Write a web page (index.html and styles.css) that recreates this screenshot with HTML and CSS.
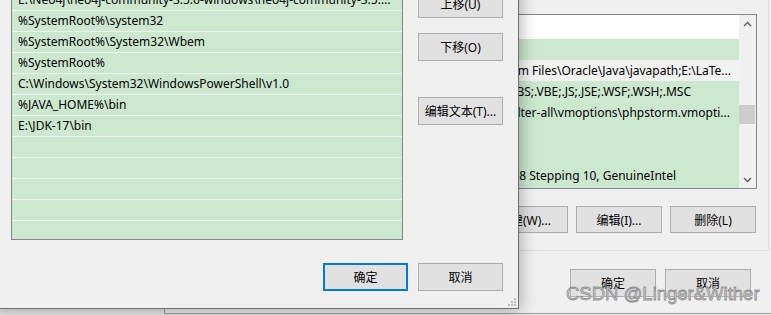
FILE: index.html
```html
<!DOCTYPE html>
<html lang="zh-CN">
<head>
<meta charset="utf-8">
<title>编辑环境变量</title>
<link rel="stylesheet" href="styles.css">
</head>
<body>
<div class="desk">
  <div class="win env">
    <div class="group">
      <div class="sys-list">
        <div class="sys-main">
          <div class="sys-head"></div>
          <div class="sys-row"><span class="v"></span></div>
          <div class="sys-row sel"><span class="v r-path">C:\Program Files\Oracle\Java\javapath;E:\LaTe...</span></div>
          <div class="sys-row"><span class="v r-ext">.COM;.EXE;.BAT;.CMD;.VBS;.VBE;.JS;.JSE;.WSF;.WSH;.MSC</span></div>
          <div class="sys-row"><span class="v r-vm">E:\jetbra\ja-netfilter-all\vmoptions\phpstorm.vmopti...</span></div>
          <div class="sys-row"><span class="v"></span></div>
          <div class="sys-row"><span class="v"></span></div>
          <div class="sys-row"><span class="v r-cpu">Intel64 Family 6 Model 158 Stepping 10, GenuineIntel</span></div>
          <div class="sys-row"><span class="v"></span></div>
        </div>
        <div class="vscroll">
          <div class="arrow"><svg width="9" height="6" viewBox="0 0 9 6"><path d="M1 5 L4.5 1.5 L8 5" fill="none" stroke="#606060" stroke-width="1.4"/></svg></div>
          <div class="track"><div class="thumb"></div></div>
          <div class="arrow"><svg width="9" height="6" viewBox="0 0 9 6"><path d="M1 1 L4.5 4.5 L8 1" fill="none" stroke="#606060" stroke-width="1.4"/></svg></div>
        </div>
      </div>
      <div class="group-btns">
        <button class="btn wide">新建(W)...</button>
        <button class="btn wide">编辑(I)...</button>
        <button class="btn wide">删除(L)</button>
      </div>
    </div>
    <div class="env-footer">
      <button class="btn wide">确定</button>
      <button class="btn wide">取消</button>
    </div>
  </div>

  <div class="win edit">
    <div class="edit-main">
      <div class="path-list">
        <div class="path-row">E:\Neo4j\neo4j-community-3.5.6-windows\neo4j-community-3.5.6\bin</div>
        <div class="path-row">%SystemRoot%\system32</div>
        <div class="path-row">%SystemRoot%\System32\Wbem</div>
        <div class="path-row">%SystemRoot%</div>
        <div class="path-row">C:\Windows\System32\WindowsPowerShell\v1.0</div>
        <div class="path-row">%JAVA_HOME%\bin</div>
        <div class="path-row">E:\JDK-17\bin</div>
        <div class="path-row"></div>
        <div class="path-row"></div>
        <div class="path-row"></div>
        <div class="path-row"></div>
        <div class="path-row"></div>
      </div>
      <div class="side-btns">
        <button class="btn up">上移(U)</button>
        <button class="btn down">下移(O)</button>
        <button class="btn text">编辑文本(T)...</button>
      </div>
    </div>
    <div class="edit-footer">
      <button class="btn default">确定</button>
      <button class="btn">取消</button>
    </div>
    <svg class="grip" width="9" height="9" viewBox="0 0 9 9">
      <rect x="7" y="1" width="2" height="2" fill="#bdbdbd"/>
      <rect x="4" y="4" width="2" height="2" fill="#bdbdbd"/>
      <rect x="7" y="4" width="2" height="2" fill="#bdbdbd"/>
      <rect x="1" y="7" width="2" height="2" fill="#bdbdbd"/>
      <rect x="4" y="7" width="2" height="2" fill="#bdbdbd"/>
      <rect x="7" y="7" width="2" height="2" fill="#bdbdbd"/>
    </svg>
  </div>

  <div class="watermark">CSDN @Linger&amp;Wither</div>
</div>
</body>
</html>
```
FILE: styles.css
```css
* { box-sizing: border-box; }
html, body { margin: 0; padding: 0; }
body {
  width: 771px;
  height: 315px;
  overflow: hidden;
  background: #f0f0f0;
  font-family: "Noto Sans", "Noto Sans CJK SC", sans-serif;
  font-size: 12px;
  color: #000;
}
.desk { position: relative; width: 771px; height: 315px; overflow: hidden; background: #ececec; }
.win { position: absolute; background: #f0f0f0; }

/* background window: environment variables */
.env {
  left: 164px; top: -100px;
  width: 620px; height: 414px;
  border: 1px solid #9c9c9c;
  display: flex; flex-direction: column;
}
.group {
  margin: 69px 14px 0 11px;
  border: 1px solid #dcdcdc;
  padding: 43px 11px 17px 0;
  display: flex; flex-direction: column;
}
.sys-list {
  height: 175px;
  border: 1px solid #828790;
  background: #cce8cf;
  display: flex;
}
.sys-main { flex: 1; min-width: 0; overflow: hidden; }
.sys-head { height: 24px; background: #ffffff; }
.sys-row {
  height: 21px;
  display: flex; justify-content: flex-end; align-items: center;
  white-space: nowrap;
}
.sys-row.sel { background: #f2f2f2; }
.v { flex: none; }
.r-path { margin-right: 8px; }
.r-ext { margin-right: 48px; }
.r-vm { margin-right: 9px; }
.r-cpu { margin-right: 63px; }
.vscroll { width: 17px; background: #f0f0f0; display: flex; flex-direction: column; }
.arrow { height: 17px; display: flex; align-items: center; justify-content: center; }
.arrow svg { display: block; }
.track { flex: 1; }
.thumb { margin: 73px 1px 0 0; height: 19px; background: #cdcdcd; }
.group-btns {
  margin-top: 17px; margin-right: 1px;
  display: flex; justify-content: flex-end; gap: 8px;
}
.env-footer {
  margin-top: 18px; margin-right: 32px;
  display: flex; justify-content: flex-end; gap: 9px;
}

/* buttons */
.btn {
  width: 85px; height: 28px;
  padding: 0;
  background: #e1e1e1;
  border: 1px solid #adadad;
  font: inherit; color: #000;
  display: flex; align-items: center; justify-content: center;
  white-space: nowrap;
}
.btn.wide { width: 86px; }
.group-btns .btn { height: 27px; }
.btn.default { border: 2px solid #0078d7; }

/* front dialog: edit environment variable */
.edit {
  left: -10px; top: -40px;
  width: 529px; height: 349px;
  border: 1px solid #707070;
  padding: 28px 15px 0 20px;
  box-shadow: 1px 2px 16px rgba(0, 0, 0, 0.32);
  display: flex; flex-direction: column;
}
.edit-main { display: flex; gap: 15px; }
.path-list {
  width: 392px; height: 251px;
  border: 1px solid #828790;
  background: #cce8cf;
  overflow: hidden;
}
.path-row {
  height: 21px;
  line-height: 20px;
  border-bottom: 1px solid #eef3ee;
  padding: 0 5px 0 6px;
  white-space: nowrap; overflow: hidden; text-overflow: ellipsis;
}
.side-btns { display: flex; flex-direction: column; }
.side-btns .up { margin-top: 1px; }
.side-btns .down { margin-top: 15px; }
.side-btns .text { margin-top: 36px; }
.edit-footer {
  margin-top: 23px;
  display: flex; justify-content: flex-end; gap: 10px;
}
.grip { position: absolute; right: 2px; bottom: 2px; display: block; }

/* watermark */
.watermark {
  position: absolute; left: 566px; top: 284px;
  font-family: "Liberation Sans", Arial, sans-serif;
  font-size: 18.5px; line-height: 20px;
  color: rgba(205, 205, 205, 0.95);
  -webkit-text-stroke: 0.8px rgba(120, 120, 120, 0.8);
  text-shadow: 0 0 1px rgba(255, 255, 255, 0.9);
  white-space: nowrap;
}
```
